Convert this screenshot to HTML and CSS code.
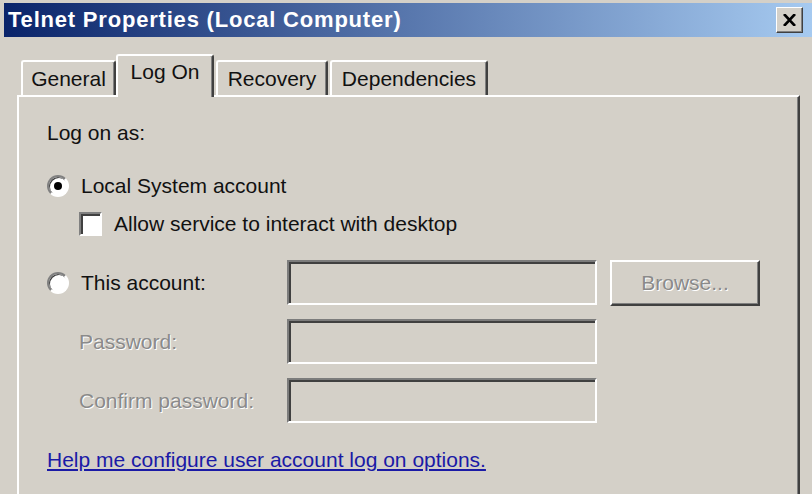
FILE: index.html
```html
<!DOCTYPE html>
<html lang="en">

<head>
    <meta charset="UTF-8">
    <meta name="viewport" content="width=device-width, initial-scale=1.0">
    <title>Telnet Properties (Local Computer)</title>
    <link rel="stylesheet" href="styles.css">
</head>

<body>
    <div class="window">
        <div class="titlebar">
            <span class="title">Telnet Properties (Local Computer)</span>
            <button class="close">
                <svg width="13" height="12" viewBox="0 0 13 12">
                    <path d="M1 0 L12 12 M12 0 L1 12" stroke="#000" stroke-width="2.6" />
                </svg>
            </button>
        </div>

        <div class="content">
            <div class="tabs">
                <div class="tab tab-general">General</div>
                <div class="tab tab-logon active">Log On</div>
                <div class="tab tab-recovery">Recovery</div>
                <div class="tab tab-deps">Dependencies</div>
            </div>

            <div class="panel">
                <p class="heading">Log on as:</p>

                <div class="option">
                    <span class="radio checked"></span>
                    <span>Local System account</span>
                </div>

                <div class="option sub">
                    <span class="checkbox"></span>
                    <span>Allow service to interact with desktop</span>
                </div>

                <div class="account">
                    <div class="option">
                        <span class="radio"></span>
                        <span>This account:</span>
                    </div>
                    <div class="field"></div>
                    <button class="browse">Browse...</button>

                    <span class="label">Password:</span>
                    <div class="field"></div>
                    <span></span>

                    <span class="label">Confirm password:</span>
                    <div class="field"></div>
                    <span></span>
                </div>

                <a class="help" href="#">Help me configure user account log on options.</a>
            </div>
        </div>
    </div>
</body>

</html>
```

FILE: styles.css
```css
*{
    margin: 0;
    padding: 0;
    box-sizing: border-box;
}
body{
    width: 812px;
    height: 494px;
    overflow: hidden;
    background-color: #d4d0c8;
    font-family: "Liberation Sans", Arial, sans-serif;
    font-size: 21px;
    color: #111;
}
.window{
    padding-top: 3px;
    padding-left: 4px;
}
.titlebar{
    height: 34px;
    display: flex;
    align-items: center;
    justify-content: space-between;
    padding: 0 9px 0 4px;
    background: linear-gradient(to right, #0a246a, #a6caf0);
}
.title{
    color: white;
    font-weight: bold;
    font-size: 22px;
    letter-spacing: 0.8px;
}
.close{
    width: 27px;
    height: 26px;
    display: flex;
    align-items: center;
    justify-content: center;
    background-color: #d4d0c8;
    border: 1px solid;
    border-color: #fff #404040 #404040 #fff;
    box-shadow: inset -1px -1px #808080;
}

/* tabs */
.content{
    padding: 17px 12px 0 13px;
}
.tabs{
    display: flex;
    align-items: flex-end;
    height: 41px;
    padding-left: 4px;
    position: relative;
    z-index: 1;
}
.tab{
    height: 35px;
    display: flex;
    align-items: center;
    justify-content: center;
    border-top: 2px solid #fff;
    border-left: 2px solid #fff;
    border-right: 2px solid #404040;
    box-shadow: inset -1px 0 #808080;
    border-radius: 3px 3px 0 0;
    margin-right: 2px;
}
.tab-general{
    width: 95px;
    margin-right: 0;
}
.tab-logon{
    width: 98px;
}
.tab-recovery{
    width: 112px;
}
.tab-deps{
    width: 158px;
}
.tab.active{
    height: 43px;
    margin-bottom: -2px;
    padding-bottom: 10px;
    background-color: #d4d0c8;
}

/* panel */
.panel{
    height: 420px;
    border-top: 2px solid #fff;
    border-left: 2px solid #fff;
    border-right: 2px solid #404040;
    box-shadow: inset -1px 0 #808080;
    padding: 24px 0 0 28px;
    display: flex;
    flex-direction: column;
    align-items: flex-start;
}
.heading{
    line-height: 24px;
}
.option{
    display: flex;
    align-items: center;
    gap: 12px;
    height: 26px;
    margin-top: 28px;
}
.option.sub{
    margin-top: 12px;
    margin-left: 32px;
}
.radio{
    width: 22px;
    height: 22px;
    border-radius: 50%;
    background-color: #fff;
    border: 2px solid;
    border-color: #808080 #fff #fff #808080;
    box-shadow: inset 1px 1px #404040;
    display: flex;
    align-items: center;
    justify-content: center;
}
.radio.checked::after{
    content: "";
    width: 8px;
    height: 8px;
    border-radius: 50%;
    background-color: #000;
}
.checkbox{
    width: 23px;
    height: 24px;
    background-color: #fff;
    border: 2px solid;
    border-color: #808080 #fff #fff #808080;
    box-shadow: inset 2px 2px #404040;
}

.account{
    display: grid;
    grid-template-columns: 227px 310px 150px;
    grid-auto-rows: 45px;
    column-gap: 13px;
    row-gap: 14px;
    align-items: center;
    margin-top: 23px;
}
.account .option{
    margin-top: 0;
}
.field{
    height: 45px;
    border: 2px solid;
    border-color: #7c7c7c #fff #fff #7c7c7c;
    box-shadow: inset 2px 2px #404040;
}
.label{
    padding-left: 32px;
    color: #8a8a8a;
    text-shadow: 1px 1px #fff;
}
.browse{
    height: 46px;
    font-family: inherit;
    font-size: 21px;
    color: #8a8a8a;
    text-shadow: 1px 1px #fff;
    background-color: #d4d0c8;
    border: 2px solid;
    border-color: #fff #404040 #404040 #fff;
    box-shadow: inset -1px -1px #808080;
}
.help{
    margin-top: 25px;
    line-height: 24px;
    color: #1a1aa6;
}
```
